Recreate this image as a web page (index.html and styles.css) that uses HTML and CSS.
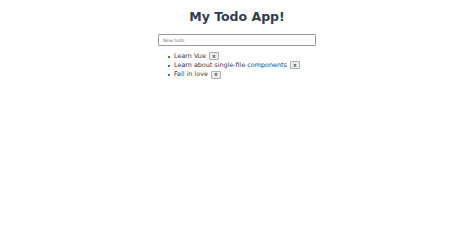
FILE: index.html
```html
<!DOCTYPE html>
<html lang="en">
<head>
<meta charset="utf-8">
<title>My Todo App!</title>
<link rel="stylesheet" href="styles.css">
</head>
<body>
<div class="app">
  <h1 class="title">My Todo App!</h1>
  <div class="todo">
    <input class="new-todo" type="text" placeholder="New todo">
    <ul class="todo-list">
      <li class="todo-item">Learn Vue <button class="remove">x</button></li>
      <li class="todo-item">Learn about single-file components <button class="remove">x</button></li>
      <li class="todo-item">Fall in love <button class="remove">x</button></li>
    </ul>
  </div>
</div>
</body>
</html>
```
FILE: styles.css
```css
html, body {
  margin: 0;
  padding: 0;
  background: #ffffff;
}
.app {
  font-family: "DejaVu Sans", sans-serif;
  color: #2c3e50;
  padding-top: 9px;
  display: flex;
  flex-direction: column;
  align-items: center;
}
.title {
  margin: 0;
  font-size: 12.5px;
  line-height: 15px;
  font-weight: bold;
  text-align: center;
}
.todo {
  width: 158px;
  margin-top: 10px;
}
.new-todo {
  box-sizing: border-box;
  display: block;
  width: 158px;
  height: 12px;
  margin: 0;
  padding: 0 4px;
  border: 1px solid #9a9a9a;
  border-radius: 1px;
  font-family: "DejaVu Sans", sans-serif;
  font-size: 4.5px;
  color: #2c3e50;
  outline: none;
}
.new-todo::placeholder {
  color: #757575;
}
.todo-list {
  margin: 6px 0 0 0;
  padding: 0 0 0 16px;
  list-style: none;
}
.todo-item {
  position: relative;
  font-size: 6.4px;
  line-height: 9.2px;
  height: 9.2px;
}
.todo-item::before {
  content: "";
  position: absolute;
  left: -6px;
  top: 4px;
  width: 2px;
  height: 2px;
  border-radius: 50%;
  background: #2c3e50;
}
.remove {
  box-sizing: border-box;
  display: inline-flex;
  align-items: center;
  justify-content: center;
  vertical-align: middle;
  width: 10px;
  height: 8px;
  margin: 0 0 0 1px;
  padding: 0;
  border: 1px solid #b0b0b0;
  border-radius: 1px;
  background: #ececec;
  color: #000;
  font-family: "DejaVu Sans", sans-serif;
  font-size: 5.5px;
  line-height: 1;
}
```
